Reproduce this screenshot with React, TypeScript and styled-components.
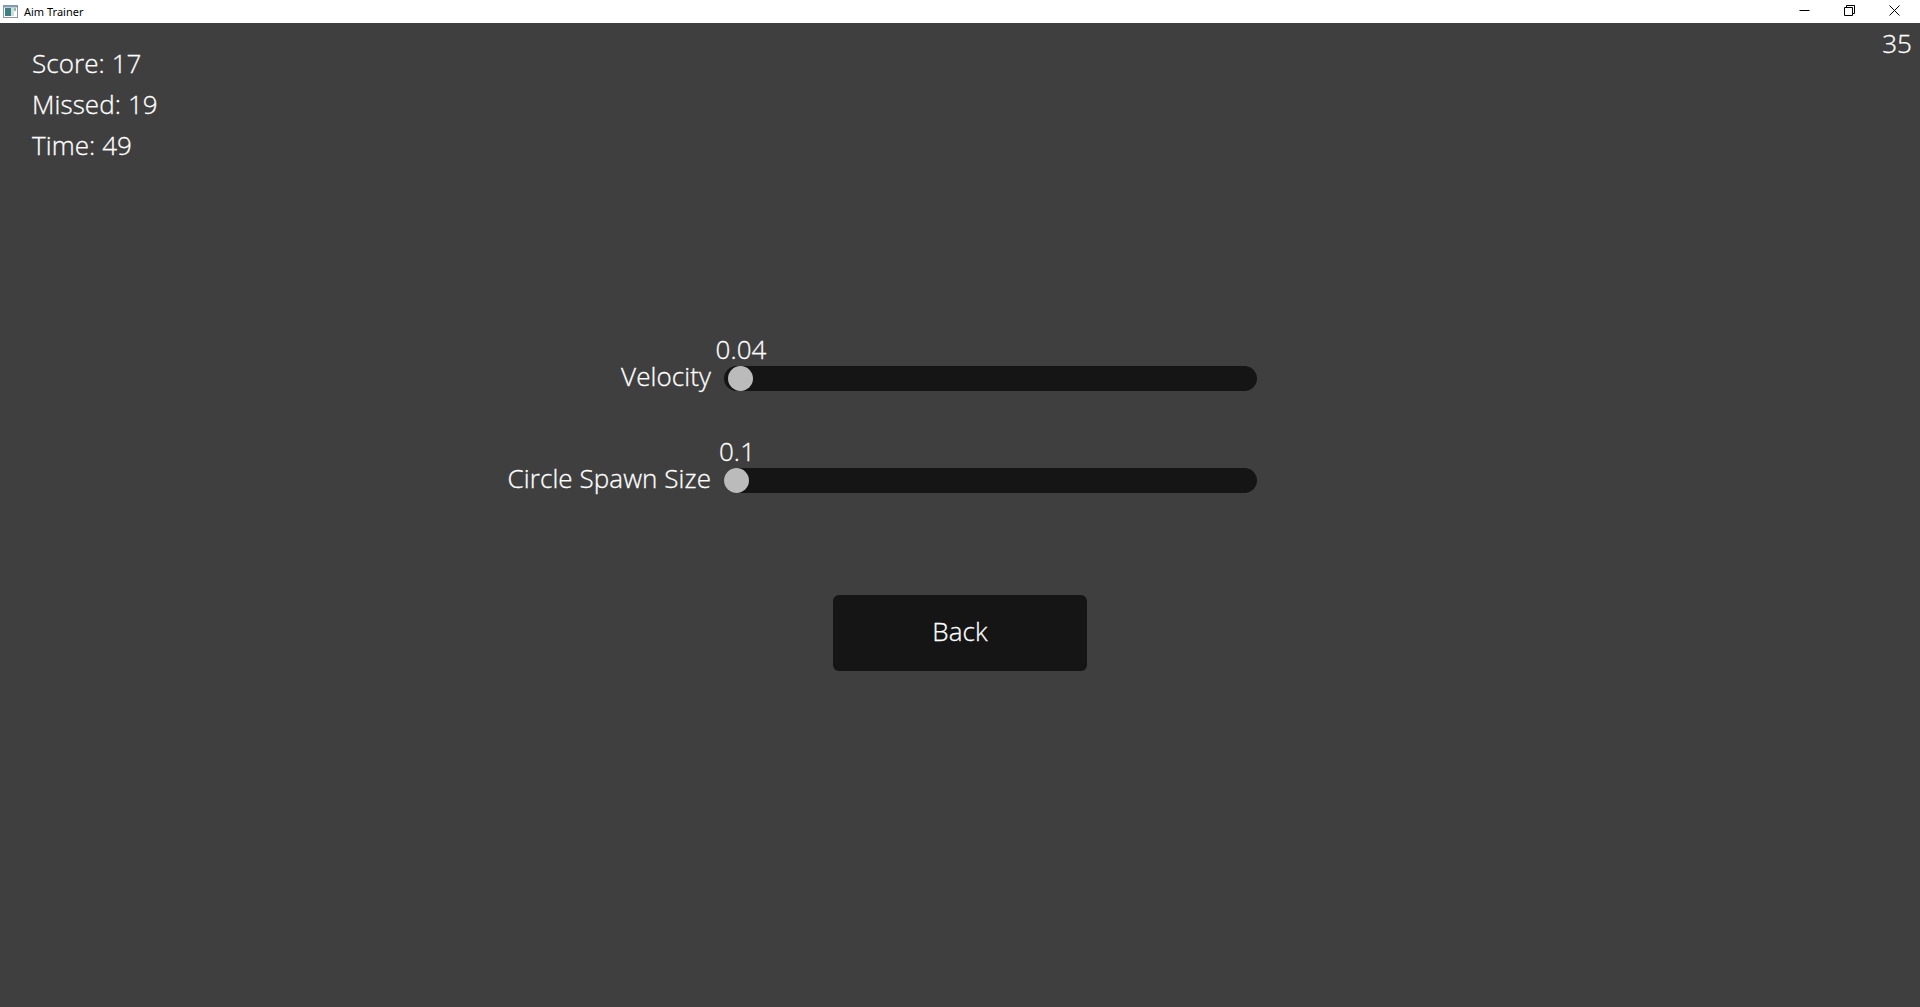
import styled, { createGlobalStyle } from "styled-components";

const GlobalStyle = createGlobalStyle`
html, body {
  margin: 0;
  padding: 0;
  height: 100%;
  background: #3f3f3f;
}
#root {
  height: 100%;
}
`;

const Window = styled.div`
display: flex;
flex-flow: column nowrap;
height: 1007px;
overflow: hidden;
font-family: "Open Sans", "Noto Sans", sans-serif;
font-weight: 300;
`;

const TitleBar = styled.div`
display: flex;
flex-flow: row nowrap;
align-items: center;
justify-content: space-between;
flex: 0 0 23px;
background: #ffffff;
color: #000000;
`;

const TitleLeft = styled.div`
display: flex;
align-items: center;
gap: 6px;
padding-left: 3px;
font-family: "Noto Sans", sans-serif;
font-weight: 400;
font-size: 11px;
`;

const WindowControls = styled.div`
display: flex;
align-items: center;
gap: 34px;
padding: 0 20px 2px 0;
`;

const Canvas = styled.div`
flex: 1;
display: flex;
flex-flow: column nowrap;
background: #3f3f3f;
color: #ffffff;
-webkit-text-stroke: 0.3px #ffffff;
letter-spacing: 0.08px;
`;

const TopRow = styled.div`
display: flex;
flex-flow: row nowrap;
justify-content: space-between;
align-items: flex-start;
height: 343px;
`;

const Stats = styled.div`
display: flex;
flex-flow: column nowrap;
padding: 20px 0 0 32px;
font-size: 26px;
line-height: 41px;
`;

const Fps = styled.div`
padding: 0 8px 0 0;
font-size: 26px;
line-height: 40px;
`;

const Sliders = styled.div`
display: flex;
flex-flow: column nowrap;
gap: 77px;
`;

const SliderRow = styled.div`
display: grid;
grid-template-columns: 711px 533px;
column-gap: 13px;
align-items: center;
height: 25px;
`;

const SliderLabel = styled.div`
text-align: right;
font-size: 26px;
line-height: 25px;
transform: translateY(-2px);
`;

const Track = styled.div`
position: relative;
height: 25px;
background: #151515;
border-radius: 12.5px;
`;

const Thumb = styled.div<{ $left: number }>`
position: absolute;
top: 0;
left: ${(p) => p.$left}px;
width: 25px;
height: 25px;
border-radius: 50%;
background: #bbbbbb;
`;

const ThumbValue = styled.div<{ $center: number }>`
position: absolute;
bottom: 25px;
left: ${(p) => p.$center}px;
transform: translateX(-50%);
font-size: 26px;
line-height: 34px;
white-space: nowrap;
`;

const BackButton = styled.button`
align-self: center;
width: 254px;
height: 76px;
margin-top: 102px;
padding: 0 0 5px;
border: none;
border-radius: 6px;
background: #151515;
color: #ffffff;
font-family: inherit;
font-weight: inherit;
font-size: 26px;
-webkit-text-stroke: inherit;
letter-spacing: inherit;
`;

function AppIcon() {
  return (
    <svg width="15" height="13" viewBox="0 0 15 13">
      <rect x="0.5" y="0.5" width="14" height="12" fill="#ffffff" stroke="#8a97a5" />
      <rect x="1" y="1" width="13" height="1.5" fill="#7f9bb5" />
      <rect x="2" y="3" width="6" height="8" fill="#3f7f86" />
      <rect x="8" y="3" width="3" height="8" fill="#cfe0dc" />
      <rect x="11" y="3" width="2" height="3" fill="#8fbf9f" />
    </svg>
  );
}

function MinimizeIcon() {
  return (
    <svg width="11" height="11" viewBox="0 0 11 11">
      <path d="M0.5 5.5h10" stroke="#000" fill="none" />
    </svg>
  );
}

function RestoreIcon() {
  return (
    <svg width="11" height="11" viewBox="0 0 11 11">
      <path d="M0.5 2.5h8v8h-8z M2.5 2.5v-2h8v8h-2" stroke="#000" fill="none" />
    </svg>
  );
}

function CloseIcon() {
  return (
    <svg width="11" height="11" viewBox="0 0 11 11">
      <path d="M0.5 0.5l10 10M10.5 0.5l-10 10" stroke="#000" fill="none" />
    </svg>
  );
}

export default function App() {
  return (
    <>
      <GlobalStyle />
      <Window>
        <TitleBar>
          <TitleLeft>
            <AppIcon />
            <span>Aim Trainer</span>
          </TitleLeft>
          <WindowControls>
            <MinimizeIcon />
            <RestoreIcon />
            <CloseIcon />
          </WindowControls>
        </TitleBar>
        <Canvas>
          <TopRow>
            <Stats>
              <div>Score: 17</div>
              <div>Missed: 19</div>
              <div>Time: 49</div>
            </Stats>
            <Fps>35</Fps>
          </TopRow>
          <Sliders>
            <SliderRow>
              <SliderLabel>Velocity</SliderLabel>
              <Track>
                <ThumbValue $center={17}>0.04</ThumbValue>
                <Thumb $left={4} />
              </Track>
            </SliderRow>
            <SliderRow>
              <SliderLabel>Circle Spawn Size</SliderLabel>
              <Track>
                <ThumbValue $center={13}>0.1</ThumbValue>
                <Thumb $left={0} />
              </Track>
            </SliderRow>
          </Sliders>
          <BackButton>Back</BackButton>
        </Canvas>
      </Window>
    </>
  );
}
